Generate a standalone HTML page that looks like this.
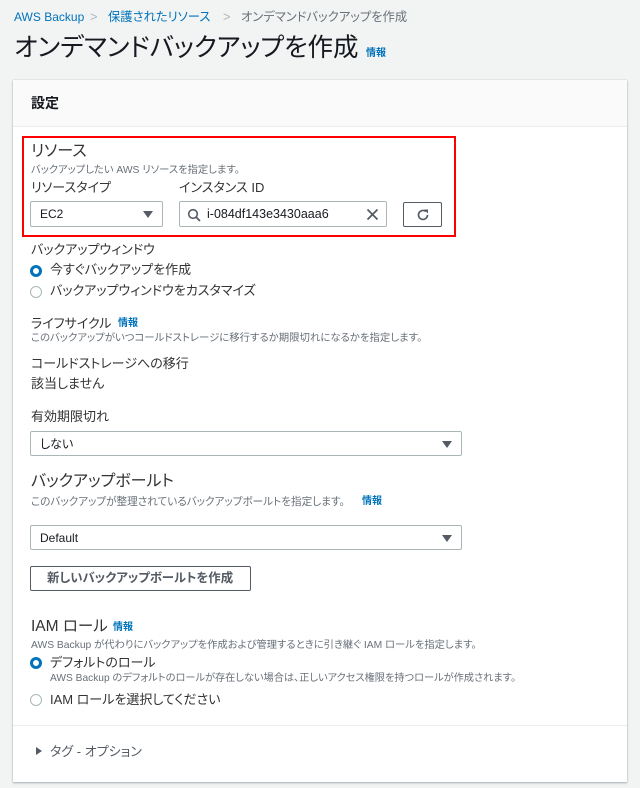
<!DOCTYPE html>
<html><head><meta charset="utf-8"><style>
*{margin:0;padding:0;box-sizing:border-box}
body{width:640px;height:788px;background:#f2f3f3;font-family:"Liberation Sans","Noto Sans CJK JP",sans-serif;color:#16191f;position:relative;overflow:hidden;font-feature-settings:"palt"}
.a{position:absolute;white-space:nowrap;line-height:1}
.blue{color:#0073bb}
.info{font-size:10px;font-weight:bold;color:#0073bb}
.g{color:#687078}
.card{position:absolute;left:13px;top:80px;width:614px;height:702px;background:#fff;box-shadow:0 1px 2px rgba(0,28,36,.3),0 0 1px rgba(0,28,36,.2)}
.sel{position:absolute;border:1px solid #aab7b8;border-radius:2px;background:#fff;font-size:12px}
.tri{position:absolute;width:0;height:0;border-left:5px solid transparent;border-right:5px solid transparent;border-top:7px solid #545b64}
.radio{position:absolute;width:12px;height:12px;border-radius:50%;border:1px solid #aab7b8;background:#fff}
.radio.on{border:3.5px solid #0073bb}
</style></head><body>
<div class="a blue" style="left:14px;top:11px;font-size:12px">AWS Backup</div>
<div class="a g" style="left:90px;top:10px;font-size:13px;color:#aab7b8">&gt;</div>
<div class="a blue" style="left:108px;top:11px;font-size:12.3px">保護されたリソース</div>
<div class="a g" style="left:223px;top:10px;font-size:13px;color:#aab7b8">&gt;</div>
<div class="a g" style="left:241px;top:11px;font-size:12.3px">オンデマンドバックアップを作成</div>
<div class="a" style="left:14px;top:36px;font-size:25.5px;color:#16191f">オンデマンドバックアップを作成</div>
<div class="a info" style="left:366px;top:49px">情報</div>
<div class="card">
<div style="position:absolute;left:0;right:0;top:0;height:47px;background:#fafafa;border-bottom:1px solid #eaeded"></div>
</div>
<div class="a" style="left:31px;top:96px;font-size:14px;font-weight:bold">設定</div>
<div style="position:absolute;left:22px;top:136px;width:434px;height:101px;border:2px solid #f00"></div>
<div class="a" style="left:31px;top:144px;font-size:16px;color:#333">リソース</div>
<div class="a g" style="left:31px;top:166px;font-size:10.3px">バックアップしたい AWS リソースを指定します。</div>
<div class="a" style="left:31px;top:181px;font-size:13px;color:#333">リソースタイプ</div>
<div class="a" style="left:179px;top:181px;font-size:13px;color:#333">インスタンス ID</div>
<div class="sel" style="left:30px;top:201px;width:133px;height:26px"><span class="a" style="left:9px;top:6px">EC2</span><div class="tri" style="left:112px;top:9px"></div></div>
<div class="sel" style="left:179px;top:201px;width:208px;height:26px">
<svg class="a" style="left:7px;top:6px" width="14" height="14" viewBox="0 0 14 14"><circle cx="6" cy="6" r="4.3" fill="none" stroke="#545b64" stroke-width="1.6"/><path d="M9 9l4 4" stroke="#545b64" stroke-width="1.8"/></svg>
<span class="a" style="left:27px;top:6px;font-size:12.5px">i-084df143e3430aaa6</span>
<svg class="a" style="left:186px;top:6px" width="13" height="13" viewBox="0 0 13 13"><path d="M1.5 1.5l10 10M11.5 1.5l-10 10" stroke="#545b64" stroke-width="1.8"/></svg></div>
<div class="sel" style="left:403px;top:202px;width:39px;height:25px;border-color:#545b64">
<svg class="a" style="left:12px;top:5px" width="14" height="14" viewBox="0 0 14 14"><path d="M11.5 7a4.5 4.5 0 1 1-1.6-3.5" fill="none" stroke="#545b64" stroke-width="1.7"/><path d="M8 1.5h4v4z" fill="#545b64"/></svg></div>
<div class="a" style="left:31px;top:243px;font-size:13px;color:#333">バックアップウィンドウ</div>
<div class="radio on" style="left:30px;top:265px"></div>
<div class="a" style="left:50px;top:263px;font-size:13px;color:#333">今すぐバックアップを作成</div>
<div class="radio" style="left:30px;top:286px"></div>
<div class="a" style="left:50px;top:284px;font-size:13px;color:#333">バックアップウィンドウをカスタマイズ</div>
<div class="a" style="left:31px;top:317px;font-size:13px;color:#333">ライフサイクル</div>
<div class="a info" style="left:118px;top:319px">情報</div>
<div class="a g" style="left:31px;top:334px;font-size:10.4px">このバックアップがいつコールドストレージに移行するか期限切れになるかを指定します。</div>
<div class="a" style="left:31px;top:357px;font-size:13px;color:#333">コールドストレージへの移行</div>
<div class="a" style="left:31px;top:377px;font-size:13px;color:#333">該当しません</div>
<div class="a" style="left:31px;top:410px;font-size:13px;color:#333">有効期限切れ</div>
<div class="sel" style="left:30px;top:431px;width:432px;height:25px"><span class="a" style="left:9px;top:6px">しない</span><div class="tri" style="left:411px;top:9px"></div></div>
<div class="a" style="left:31px;top:474px;font-size:16px;color:#333">バックアップボールト</div>
<div class="a g" style="left:31px;top:497px;font-size:10.6px">このバックアップが整理されているバックアップボールトを指定します。</div>
<div class="a info" style="left:362px;top:497px">情報</div>
<div class="sel" style="left:30px;top:525px;width:432px;height:25px"><span class="a" style="left:9px;top:6px">Default</span><div class="tri" style="left:411px;top:9px"></div></div>
<div class="sel" style="left:30px;top:566px;width:221px;height:25px;border-color:#545b64"><span class="a" style="left:16px;top:5px;font-size:12.4px;font-weight:bold;color:#545b64">新しいバックアップボールトを作成</span></div>
<div class="a" style="left:31px;top:619px;font-size:15.5px;color:#333">IAM ロール</div>
<div class="a info" style="left:113px;top:623px">情報</div>
<div class="a g" style="left:31px;top:641px;font-size:10.3px">AWS Backup が代わりにバックアップを作成および管理するときに引き継ぐ IAM ロールを指定します。</div>
<div class="radio on" style="left:30px;top:657px"></div>
<div class="a" style="left:50px;top:656px;font-size:13px;color:#333">デフォルトのロール</div>
<div class="a g" style="left:50px;top:674px;font-size:10.2px">AWS Backup のデフォルトのロールが存在しない場合は、正しいアクセス権限を持つロールが作成されます。</div>
<div class="radio" style="left:30px;top:694px"></div>
<div class="a" style="left:50px;top:693px;font-size:13px;color:#333">IAM ロールを選択してください</div>
<div style="position:absolute;left:13px;top:725px;width:614px;height:1px;background:#eaeded"></div>
<div style="position:absolute;left:36px;top:747px;width:0;height:0;border-top:4.5px solid transparent;border-bottom:4.5px solid transparent;border-left:6px solid #545b64"></div>
<div class="a" style="left:50px;top:745px;font-size:13px;color:#545b64">タグ - オプション</div>
</body></html>
